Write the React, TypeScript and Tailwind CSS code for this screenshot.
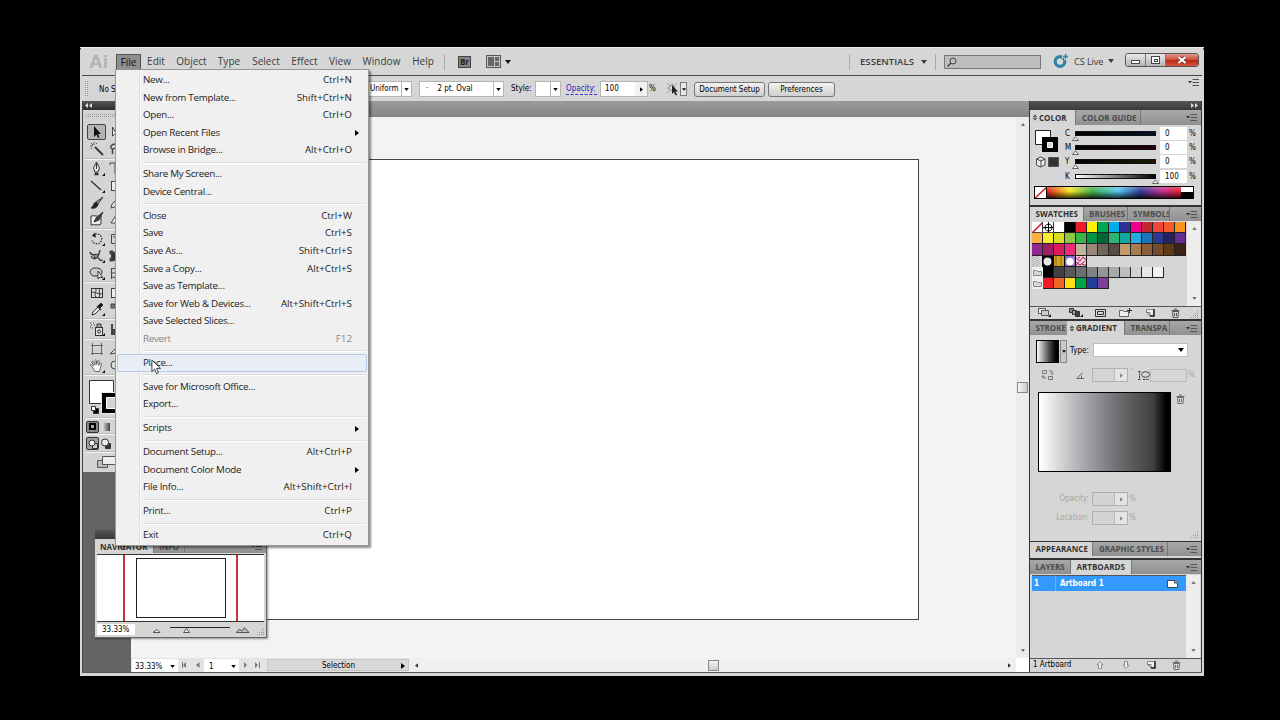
import type { ReactNode } from "react";
import clsx from "clsx";

type MenuEntry = {
  label: string;
  keys?: string;
  submenu?: boolean;
  disabled?: boolean;
  active?: boolean;
};

const fileMenu: MenuEntry[][] = [
  [
    { label: "New...", keys: "Ctrl+N" },
    { label: "New from Template...", keys: "Shift+Ctrl+N" },
    { label: "Open...", keys: "Ctrl+O" },
    { label: "Open Recent Files", submenu: true },
    { label: "Browse in Bridge...", keys: "Alt+Ctrl+O" },
  ],
  [{ label: "Share My Screen..." }, { label: "Device Central..." }],
  [
    { label: "Close", keys: "Ctrl+W" },
    { label: "Save", keys: "Ctrl+S" },
    { label: "Save As...", keys: "Shift+Ctrl+S" },
    { label: "Save a Copy...", keys: "Alt+Ctrl+S" },
    { label: "Save as Template..." },
    { label: "Save for Web & Devices...", keys: "Alt+Shift+Ctrl+S" },
    { label: "Save Selected Slices..." },
    { label: "Revert", keys: "F12", disabled: true },
  ],
  [{ label: "Place...", active: true }],
  [{ label: "Save for Microsoft Office..." }, { label: "Export..." }],
  [{ label: "Scripts", submenu: true }],
  [
    { label: "Document Setup...", keys: "Alt+Ctrl+P" },
    { label: "Document Color Mode", submenu: true },
    { label: "File Info...", keys: "Alt+Shift+Ctrl+I" },
  ],
  [{ label: "Print...", keys: "Ctrl+P" }],
  [{ label: "Exit", keys: "Ctrl+Q" }],
];

const swatchRows = [
  ["none", "reg", "#ffffff", "#000000", "#ed1c24", "#fff200", "#00a651", "#00aeef", "#2e3192", "#ec008c", "#c1272d", "#f0473a", "#f15a29", "#f7941e"],
  ["#fbb040", "#f9ed32", "#d7df23", "#8dc63f", "#39b54a", "#009444", "#006838", "#2bb673", "#14a79d", "#27aae1", "#1c75bc", "#2b3990", "#262262", "#662d91"],
  ["#92278f", "#9e1f63", "#da1c5c", "#ee2a7b", "#c2b59b", "#9b8579", "#726658", "#594a42", "#c49a6c", "#a97c50", "#8b5e3c", "#754c29", "#603913", "#3c2415"],
];
const grays = ["#000000", "#414042", "#58595b", "#6d6e71", "#808285", "#939598", "#a7a9ac", "#bcbec0", "#d1d3d4", "#e6e7e8", "#f1f2f2"];
const brights = ["#ed1c24", "#f26522", "#ffde17", "#00a14b", "#21409a", "#7f3f98"];

function Down({ className = "h-[4px] w-[6px]" }: { className?: string }) {
  return (
    <svg viewBox="0 0 6 4" className={clsx("shrink-0", className)}>
      <path d="M0 0h6L3 4z" fill="currentColor" />
    </svg>
  );
}

function Right({ className = "h-[6px] w-[4px]" }: { className?: string }) {
  return (
    <svg viewBox="0 0 4 6" className={clsx("shrink-0", className)}>
      <path d="M0 0v6l4-3z" fill="currentColor" />
    </svg>
  );
}

function FileMenu() {
  return (
    <div className="absolute left-[35px] top-[22px] h-[477px] w-[254px] border border-[#979797] bg-[#f0f0f0] shadow-[2px_2px_2px_rgba(0,0,0,0.45)]">
      <div className="flex h-full flex-col bg-[linear-gradient(to_right,transparent_23px,#dfdfdf_23px,#dfdfdf_24px,#fafafa_24px,#fafafa_25px,transparent_25px)] pt-[1.7px] font-['Open_Sans',sans-serif] text-[9.8px] text-[#1c1c1c] [font-stretch:normal]">
        {fileMenu.map((group, i) => (
          <div key={i} className="flex flex-col">
            {i > 0 && (
              <div className="flex h-[6.4px] items-center pl-[26px] pr-[2px]">
                <div className="h-[2px] w-full border-b border-white bg-[#dedede]" />
              </div>
            )}
            {group.map((item) => (
              <div
                key={item.label}
                className={clsx(
                  "mx-px flex h-[17.57px] items-center justify-between whitespace-nowrap pl-[26px]",
                  item.disabled && "text-[#868686]",
                  item.active && "rounded-[2px] bg-[#e9edf6] shadow-[inset_0_0_0_1px_#b4cbe8]",
                )}
              >
                <span className="tracking-[-0.28px]">{item.label}</span>
                {item.submenu ? (
                  <Right className="mr-[8px] h-[6px] w-[4px] text-black" />
                ) : (
                  <span className="mr-[15px]">{item.keys}</span>
                )}
              </div>
            ))}
          </div>
        ))}
      </div>
    </div>
  );
}

function AppBar() {
  return (
    <div className="flex h-[28px] shrink-0 items-center border-t border-[#eeeeee] font-['Open_Sans',sans-serif] text-[10px] text-[#3c3c3c] [font-stretch:normal]">
      <div className="w-[36px] pl-[9px] font-['Liberation_Sans',sans-serif] text-[19px] font-bold leading-none text-[#b2b2b2]">Ai</div>
      <div className="mt-[1px] flex h-[16px] w-[25px] items-center justify-center border border-[#555] bg-[#8f8f8f] text-[#111]">File</div>
      <span className="w-[30px] text-center">Edit</span>
      <span className="w-[41px] text-center">Object</span>
      <span className="w-[34px] text-center">Type</span>
      <span className="w-[40px] text-center">Select</span>
      <span className="w-[37px] text-center">Effect</span>
      <span className="w-[34px] text-center">View</span>
      <span className="w-[49px] text-center">Window</span>
      <span className="w-[34px] text-center">Help</span>
      <div className="ml-[4px] h-[16px] w-px bg-[#aaa]" />
      <div className="ml-[13px] flex h-[12px] w-[13px] items-center justify-center border border-[#444] bg-[#858585] text-[8px] font-bold text-[#222]">Br</div>
      <svg viewBox="0 0 15 13" className="ml-[15px] h-[13px] w-[15px]">
        <rect x="0.5" y="0.5" width="14" height="12" fill="#c6c6c6" stroke="#555" />
        <path d="M2 2h6v9H2zM9 2h4v4H9zM9 7h4v4H9z" fill="#666" />
      </svg>
      <Down className="ml-[4px] h-[4px] w-[6px] text-[#111]" />
      <div className="ml-auto h-[16px] w-px bg-[#aaa]" />
      <span className="ml-[10px] w-[56px] whitespace-nowrap pt-px text-[9.6px] font-semibold">ESSENTIALS</span>
      <Down className="ml-[5px] h-[4px] w-[6px]" />
      <div className="ml-[8px] h-[16px] w-px bg-[#aaa]" />
      <div className="ml-[8px] mt-[1px] flex h-[14px] w-[97px] items-center border border-[#777] bg-[#bdbdbd] pl-[2px]">
        <svg viewBox="0 0 10 10" className="h-[10px] w-[10px]" fill="none" stroke="#444">
          <circle cx="6" cy="4" r="3" />
          <path d="M4 6 0.5 9.5" strokeWidth="1.4" />
        </svg>
      </div>
      <svg viewBox="0 0 16 15" className="ml-[12px] mt-[-3px] h-[15px] w-[16px]" fill="none">
        <circle cx="7" cy="8.5" r="4.8" stroke="#2a83a8" strokeWidth="3.2" />
        <path d="M12.5 0v7M9 3.5h7" stroke="#d6d6d6" strokeWidth="3" />
        <path d="M12.5 1v5M10 3.5h5" stroke="#2a83a8" strokeWidth="1.3" />
      </svg>
      <span className="ml-[5px] w-[32px] whitespace-nowrap text-[9.2px] tracking-[-0.1px]">CS Live</span>
      <Down className="ml-[2px] mt-[-2px] h-[4px] w-[6px]" />
      <div className="ml-[11px] mr-[5px] mt-[-3px] flex h-[14px] w-[74px] overflow-hidden rounded-[3px] border border-[#555]">
        <div className="flex w-[20px] items-end justify-center border-r border-[#777] bg-gradient-to-b from-[#e8e8e8] to-[#b5b5b5] pb-[2px]">
          <div className="h-[4px] w-[9px] border border-[#444] bg-white" />
        </div>
        <div className="flex w-[20px] items-center justify-center border-r border-[#777] bg-gradient-to-b from-[#e8e8e8] to-[#b5b5b5]">
          <div className="flex h-[8px] w-[9px] items-center justify-center border border-[#444] bg-white">
            <div className="h-[3px] w-[4px] border border-[#444]" />
          </div>
        </div>
        <div className="flex flex-1 items-center justify-center bg-[linear-gradient(#e2998c,#cf4a36_50%,#b5281a_51%,#d9533a)]">
          <svg viewBox="0 0 10 8" className="h-[8px] w-[10px]">
            <path d="M1.5 1 8.5 7M8.5 1 1.5 7" stroke="#633" strokeWidth="3.5" />
            <path d="M1.5 1 8.5 7M8.5 1 1.5 7" stroke="#fff" strokeWidth="2.2" />
          </svg>
        </div>
      </div>
    </div>
  );
}

function DropBox({ className, children }: { className?: string; children?: ReactNode }) {
  return (
    <div className={clsx("flex h-[16px] shrink-0 items-center border border-[#b5b5b5] bg-white", className)}>
      <span className="flex-1 whitespace-pre">{children}</span>
      <span className="flex h-full w-[10px] items-center justify-center border-l border-[#b5b5b5]">
        <Down className="h-[3px] w-[5px]" />
      </span>
    </div>
  );
}

function PanelMenuIcon({ className }: { className?: string }) {
  return (
    <svg viewBox="0 0 11 7" className={clsx("h-[7px] w-[11px] shrink-0", className)}>
      <path d="M0 2h4L2 4.5z" fill="#333" />
      <path d="M4.5 .5H11M4.5 3.5H11M4.5 6.5H11" stroke="#555" />
    </svg>
  );
}

function ControlBar() {
  return (
    <div className="flex h-[26px] shrink-0 items-center border-t border-[#4a4a4a] bg-[#d6d6d6] pt-px text-[8px] leading-[12px] text-black">
      <svg viewBox="0 0 3 16" className="ml-[3px] h-[16px] w-[3px]">
        <path d="M.5 0v16M2.5 0v16" stroke="#999" strokeDasharray="1 1" />
      </svg>
      <span className="ml-[11px] w-[269px] pt-px">No Selection</span>
      <DropBox className="w-[44px] pl-[1px]">Uniform</DropBox>
      <DropBox className="ml-[7px] w-[85px] pl-[6px]">{"·    2 pt. Oval"}</DropBox>
      <span className="ml-[7px] w-[24px]">Style:</span>
      <DropBox className="w-[26px]" />
      <span className="ml-[5px] w-[31px] border-b border-dashed border-[#3a35c9] leading-[10px] text-[#2a25c0]">Opacity:</span>
      <div className="ml-[3px] flex h-[16px] w-[48px] items-center border border-[#b5b5b5] bg-white pl-[4px]">
        <span className="flex-1">100</span>
        <span className="flex h-full w-[12px] items-center justify-center bg-[#f2f2f2]">
          <Right className="h-[5px] w-[3px]" />
        </span>
      </div>
      <span className="ml-[1px] w-[8px]">%</span>
      <svg viewBox="0 0 14 14" className="ml-[9px] h-[14px] w-[14px]" fill="none">
        <path d="M3.5 3.5h5v5h-5zM1 1l2 2M11 1 9 3M1 11l2-2M1 6h2M6 1v2" stroke="#888" strokeDasharray="2 1" />
        <path d="M6 3v9l2-2 1.5 3.5 1.5-.7L9.5 9.5H12z" fill="#222" />
      </svg>
      <div className="flex h-[14px] w-[7px] items-center justify-center border border-[#777] bg-[#e8e8e8]">
        <Down className="h-[3px] w-[4px]" />
      </div>
      <div className="ml-[7px] flex h-[15px] w-[71px] items-center justify-center whitespace-nowrap rounded-[3px] border border-[#777] bg-gradient-to-b from-[#f2f2f2] to-[#cfcfcf] pt-px">
        Document Setup
      </div>
      <div className="ml-[3px] flex h-[15px] w-[67px] items-center justify-center rounded-[3px] border border-[#777] bg-gradient-to-b from-[#f2f2f2] to-[#cfcfcf] pt-px">
        Preferences
      </div>
      <PanelMenuIcon className="mb-[14px] ml-auto mr-[3px]" />
    </div>
  );
}

function Tool({ children, right, corner, selected }: { children: ReactNode; right?: ReactNode; corner?: boolean; selected?: boolean }) {
  return (
    <div className="flex h-[16.8px] items-center pl-[4px]">
      <div
        className={clsx(
          "flex h-[16px] w-[19px] shrink-0 items-center justify-center",
          selected && "rounded-[2px] border border-[#444] bg-[#b4b4b4]",
        )}
      >
        <svg viewBox="0 0 16 16" className="h-[16px] w-[16px] shrink-0" fill="none" stroke="#333">
          {children}
          {corner && <path d="M16 12v3h-3z" fill="#111" stroke="none" />}
        </svg>
      </div>
      <svg viewBox="0 0 16 16" className="ml-[3px] h-[16px] w-[16px] shrink-0" fill="none" stroke="#444">
        {right}
      </svg>
    </div>
  );
}

function ToolRule() {
  return <div className="mx-[2px] my-px h-px bg-[#f4f4f4] shadow-[0_-1px_0_#bdbdbd]" />;
}

function Toolbox() {
  return (
    <div className="flex w-[49px] shrink-0 flex-col border-l border-[#444] bg-[#646464]">
      <div className="flex h-[9px] shrink-0 items-center bg-gradient-to-b from-[#555] to-[#2e2e2e] pl-[2px]">
        <svg viewBox="0 0 7 5" className="h-[5px] w-[7px]">
          <path d="M3 0v5L0 2.5zM7 0v5L4 2.5z" fill="#ddd" />
        </svg>
      </div>
      <div className="flex h-[362px] shrink-0 flex-col bg-[#d4d4d4]">
        <svg viewBox="0 0 44 3" className="mb-[7px] ml-[3px] mt-[4px] h-[3px] w-[44px] shrink-0">
          <path d="M0 .5h44M0 2.5h44" stroke="#999" strokeDasharray="1 1" />
        </svg>
        <Tool selected right={<path d="M3.5 3v9l2.5-2 3 3z" fill="#eee" />}>
          <path d="M5 2v11l2.500-2.500L9 14l1.500-.7L9 10h3z" fill="#111" stroke="none" />
        </Tool>
        <Tool right={<path d="M7 3C3 3 1 5 2 7s4 0 4 0M4 8c-2 2 1 3-1 5" strokeWidth="1.5" />}>
          <path d="m6 6 8 8" strokeWidth="1.8" />
          <path d="M5 1v3M1 5h3M2 2l2 2M8 2 7 3M2 8l1-1" stroke="#555" />
        </Tool>
        <ToolRule />
        <Tool corner right={<path d="M1 4V2h10v2M6 2v11" />}>
          <path d="M7.5 1 4.5 7l1.500 4h3l1.500-4zM7.5 2v6" fill="#e8e8e8" />
          <path d="M5.5 13h4" strokeWidth="2.500" />
        </Tool>
        <Tool corner right={<rect x="2.5" y="3.5" width="12" height="9" fill="#eee" />}>
          <path d="m2 3 10 9" strokeWidth="1.4" />
        </Tool>
        <Tool right={<path d="m2 13 1-4 7-7 3 3-7 7z" fill="#ddd" />}>
          <path d="M14 2 7 7l2 2z" fill="#999" />
          <path d="M7 7c-3 1-2 4-5 6 4 1 7-1 7-4z" fill="#222" />
        </Tool>
        <Tool right={<path d="m2 12 5-8 7 3-4 5z" fill="#eee" />}>
          <path d="M2 5c3-1 7 1 10 0v8c-3 2-7 0-10 1z" fill="#eee" />
          <path d="m14 1-7 6-2 4 5-2z" fill="#444" />
        </Tool>
        <ToolRule />
        <Tool corner right={<path d="M2.5 3.5h11v9h-11zM4 5l6 5M10 7v3H7" />}>
          <path d="M4 4.5a5 5 0 1 1-1 5" strokeDasharray="1.5 1.2" strokeWidth="1.3" />
          <path d="M6 1.5 3 5l4 1.500z" fill="#222" stroke="none" />
        </Tool>
        <Tool corner right={<path d="M2.5 4.5h10v8h-10zM1 3h3v3H1zM1 10h3v3H1z" fill="#333" />}>
          <path d="M1 4c2 6 5 0 7 4s4 5 6 4M2 8c3 5 7 3 9-6" strokeWidth="1.3" />
          <circle cx="7" cy="8" r="2" fill="#999" />
        </Tool>
        <Tool corner right={<path d="M2.5 3v11M2 4l9-2M2 8h9M2 12l9 1M7 2v11" />}>
          <path d="M2 9c-2-3 0-6 4-6s7 1 7 4-3 4-6 4-4 0-5-2z" fill="#ccc" />
          <path d="M9 6v8l2-2 3 1z" fill="#fff" />
        </Tool>
        <ToolRule />
        <Tool right={<rect x="2.5" y="3.5" width="12" height="9" fill="#eee" />}>
          <rect x="2.5" y="3.5" width="11" height="9" fill="#ddd" />
          <path d="M2 8c3-3 8 3 12 0M6 3c3 3-2 6 1 9M11 3c-2 4 1 6-1 9" />
        </Tool>
        <Tool corner right={<path d="M2 3h4v4H2zM7 8h6v5H7z" fill="#777" />}>
          <path d="m3 14 1-3 5-5 2 2-5 5z" fill="#eee" />
          <path d="m9 5 3-3 2 2-3 3z" fill="#111" />
          <path d="m8 5 4 4" strokeWidth="1.5" />
        </Tool>
        <ToolRule />
        <Tool corner right={<path d="M3 3v11M5 14V8M8 14V5M11 14V9" strokeWidth="2" />}>
          <rect x="6.5" y="6.5" width="7" height="8" fill="#ddd" />
          <path d="M8 6V3h4v3" fill="#aaa" />
          <circle cx="10" cy="10.5" r="1.5" />
          <path d="M1 2h1M4 2h1M2 4h1M5 4h1M1 6h1M3 7h1" />
        </Tool>
        <ToolRule />
        <Tool right={<path d="m1 13 9-9 2 2-5 6z" fill="#ddd" />}>
          <path d="M3.5 2v12M12.5 2v12M2 4.5h12M2 12.5h12" stroke="#666" />
        </Tool>
        <Tool corner right={<circle cx="6" cy="7" r="4" fill="#ddd" />}>
          <path d="M4 10 1.500 7.500c-.5-1 .5-1.500 1.200-.8L4.500 8 3 4c0-1 1-1 1.500 0L6 7V2.500c0-1 1.200-1 1.500 0V6.500L9 3c.5-1 1.500-.5 1.200.4L9.500 7.500l2-2.500c.8-.5 1.300.2 1 1L10.500 13.500H6z" fill="#fafafa" stroke="#666" />
        </Tool>
        <ToolRule />
        <svg viewBox="0 0 46 40" className="h-[40px] w-[46px] shrink-0" fill="none">
          <path d="M6.5 3.5h24v23h-24z" fill="#fff" stroke="#333" />
          <path d="M18.5 15.5h26v21h-26z" fill="#000" stroke="#eee" />
          <path d="M23.500 20.5h14v11h-14z" fill="#d4d4d4" stroke="#fff" />
          <path d="M10.5 31.5h5v5h-5z" fill="#000" stroke="#333" />
          <path d="M8.5 29.5h4v4h-4z" fill="#fff" stroke="#333" />
        </svg>
        <ToolRule />
        <div className="flex h-[13px] shrink-0 items-center gap-[3px] pl-[3px]">
          <div className="flex h-[12px] w-[13px] items-center justify-center rounded-[2px] border border-[#333] bg-[#888]">
            <div className="h-[7px] w-[7px] border-2 border-black bg-[#aaa]" />
          </div>
          <div className="h-[8px] w-[8px] bg-gradient-to-r from-[#eee] to-[#444]" />
        </div>
        <ToolRule />
        <div className="flex h-[15px] shrink-0 items-center gap-px pl-[3px]">
          <div className="flex h-[13px] w-[13px] items-center justify-center rounded-[2px] border border-[#333] bg-[#a0a0a0]">
            <svg viewBox="0 0 10 10" className="h-[10px] w-[10px]" stroke="#333">
              <path d="M4.5 4.5h5v5h-5z" fill="#ccc" />
              <circle cx="4" cy="4" r="3" fill="#eee" />
            </svg>
          </div>
          <svg viewBox="0 0 11 11" className="h-[11px] w-[11px]" stroke="#333">
            <path d="M5.5 5.5h5v5h-5z" fill="#333" />
            <circle cx="5" cy="4.5" r="3.5" fill="#eee" />
          </svg>
        </div>
        <ToolRule />
        <svg viewBox="0 0 20 12" className="ml-[14px] mt-[2px] h-[12px] w-[20px] shrink-0" stroke="#555">
          <path d="M.5 4.5h10v7H.5z" fill="#bbb" />
          <path d="M5.5 .5h13v8h-13z" fill="#eee" />
        </svg>
      </div>
    </div>
  );
}

function Tabs({ children, className = "h-[14px]" }: { children: ReactNode; className?: string }) {
  return (
    <div
      className={clsx(
        "flex shrink-0 items-stretch bg-gradient-to-b from-[#a8a8a8] to-[#909090] font-['Open_Sans',sans-serif] text-[8px] font-bold text-[#4c4c4c] [font-stretch:normal]",
        className,
      )}
    >
      {children}
      <PanelMenuIcon className="ml-auto mr-[4px] self-center" />
    </div>
  );
}

function Tab({ label, active, arrows, className }: { label: string; active?: boolean; arrows?: boolean; className: string }) {
  return (
    <div
      className={clsx(
        "flex shrink-0 items-center overflow-hidden whitespace-nowrap border-r border-[#777] leading-none",
        active && "bg-[#d6d6d6] text-[#333]",
        className,
      )}
    >
      {arrows && (
        <svg viewBox="0 0 4 7" className="mr-[2px] h-[7px] w-[4px] shrink-0" fill="none" stroke="#333" strokeWidth="0.8">
          <path d="M.4 2.700 2 .8l1.600 1.900zM.4 4.300 2 6.200l1.600-1.900z" />
        </svg>
      )}
      {label}
    </div>
  );
}

const channels = [
  { name: "C", value: "0", bar: "bg-[linear-gradient(to_right,#000,#001226)]", thumb: "ml-[-3px]" },
  { name: "M", value: "0", bar: "bg-[linear-gradient(to_right,#000,#26000c)]", thumb: "ml-[-3px]" },
  { name: "Y", value: "0", bar: "bg-[linear-gradient(to_right,#000,#1c1a00)]", thumb: "ml-[-3px]" },
  { name: "K", value: "100", bar: "bg-[linear-gradient(to_right,#fff,#000)]", thumb: "ml-[77px]" },
];

function ColorPanel() {
  return (
    <>
      <Tabs className="h-[15px]">
        <Tab label="COLOR" active arrows className="w-[46px] pl-[3px]" />
        <Tab label="COLOR GUIDE" className="w-[65px] pl-[6px]" />
      </Tabs>
      <div className="flex h-[80px] shrink-0 flex-col bg-[#d6d6d6] pt-px">
        <div className="flex">
          <div className="w-[34px] pl-[5px] pt-[3px]">
            <svg viewBox="0 0 24 40" className="h-[40px] w-[24px]" fill="none">
              <path d="M.5 1.5h15v14H.5z" fill="#fff" stroke="#222" />
              <path d="M7 8h16v15H7z" fill="#000" />
              <path d="M12.5 13.5h5v5h-5z" fill="#d6d6d6" stroke="#fff" />
              <path d="M5.5 28 10 30v6l-4.500 2L1.500 36v-6zM1.5 30l4.500 2 4-2M6 32v6" fill="#eee" stroke="#444" />
              <path d="M13.5 28.5h10v9h-10z" fill="#333" stroke="#555" />
            </svg>
          </div>
          <div className="flex flex-col">
            {channels.map((c) => (
              <div key={c.name} className="flex h-[14.4px] items-center text-[8px]">
                <span className="w-[11px] pl-px pt-px">{c.name}</span>
                <div className="h-[5px] w-[81px]">
                  <div className={clsx("h-[5px] w-full border border-[#111]", c.bar)} />
                  <svg viewBox="0 0 7 5" className={clsx("h-[5px] w-[7px]", c.thumb)}>
                    <path d="M.5 4.5h6L3.5 .8z" fill="#f5f5f5" stroke="#666" />
                  </svg>
                </div>
                <div className="ml-[4px] flex h-[13px] w-[27px] items-center bg-white pl-[5px] pt-px">{c.value}</div>
                <span className="ml-[2px] pt-px">%</span>
              </div>
            ))}
          </div>
        </div>
        <div className="ml-[4px] mt-[2px] flex h-[13px] w-[160px] border border-black">
          <svg viewBox="0 0 12 11" className="h-[11px] w-[12px] shrink-0">
            <path d="M0 0h12v11H0z" fill="#fff" />
            <path d="m0 11 12-11" stroke="#d02020" strokeWidth="1.5" />
            <path d="M11.5 0v11" stroke="#111" />
          </svg>
          <div className="flex-1 bg-[linear-gradient(to_bottom,rgba(255,255,255,0.25),transparent_40%,rgba(0,0,0,0.75)),linear-gradient(to_right,#e3231c,#f5e422_17%,#3fae49_34%,#53c6ee_53%,#2f3b98_70%,#c32a8d_86%,#e3202c)]" />
          <div className="flex w-[12px] flex-col bg-black">
            <div className="h-[5px] bg-white" />
          </div>
        </div>
      </div>
    </>
  );
}

function Swatch({ color }: { color: string }) {
  if (color === "none" || color === "reg") {
    return (
      <svg viewBox="0 0 11 11" className="h-[11.2px] w-[11px]" fill="none">
        <path d="M0 0h11v11H0z" fill="#fff" />
        {color === "none" ? (
          <path d="M0 11 11 0" stroke="#c22" strokeWidth="1.5" />
        ) : (
          <path d="M5.5 0v11M0 5.5h11M5.5 2a3.5 3.5 0 1 0 .01 0" stroke="#000" />
        )}
        <path d="M10.5 0v10.5H0" stroke="#333" />
      </svg>
    );
  }
  return <div className="h-[11.2px] w-[11px] border-b border-r border-[#222]" style={{ backgroundColor: color }} />;
}

function Folder() {
  return (
    <div className="flex h-[11.2px] w-[11px] items-center justify-center bg-[#eee]">
      <svg viewBox="0 0 9 7" className="h-[7px] w-[9px]">
        <path d="M.5 1.5h3l1 1h4v4h-8z" fill="#d8d8d8" stroke="#888" />
      </svg>
    </div>
  );
}

function Trash({ className }: { className?: string }) {
  return (
    <svg viewBox="0 0 9 10" className={clsx("h-[10px] w-[9px] shrink-0", className)} fill="none" stroke="#555">
      <path d="M1.5 3.5h6l-.5 6H2zM.5 2.5h8M3 1h3M3.5 5v3M5.5 5v3" />
    </svg>
  );
}

function NewItem({ className }: { className?: string }) {
  return (
    <svg viewBox="0 0 9 9" className={clsx("h-[9px] w-[9px] shrink-0", className)} fill="none">
      <path d="M.5 1.5h7v6H4l-3.500-3z" fill="#eee" stroke="#888" />
      <path d="M.5 4.5h3.500v3z" fill="#fff" stroke="#777" />
      <path d="M8 1v7H4" stroke="#222" strokeWidth="1.500" />
    </svg>
  );
}

function Grip() {
  return (
    <svg viewBox="0 0 9 9" className="h-[9px] w-[9px] shrink-0" stroke="#999">
      <path d="M7 1.5h1M5 3.5h1M7 3.5h1M3 5.5h1M5 5.5h1M7 5.5h1M1 7.5h1M3 7.5h1M5 7.5h1M7 7.5h1" />
    </svg>
  );
}

function VTrack({ className }: { className?: string }) {
  return (
    <div className={clsx("flex flex-col items-center justify-between bg-[#ededed] py-[6px] text-[#777]", className)}>
      <Down className="h-[3px] w-[5px] rotate-180" />
      <Down className="h-[3px] w-[5px]" />
    </div>
  );
}

function SwatchesPanel() {
  return (
    <>
      <Tabs>
        <Tab label="SWATCHES" active className="w-[54px] pl-[5.5px]" />
        <Tab label="BRUSHES" className="w-[44px] pl-[5px]" />
        <Tab label="SYMBOLS" className="w-[42px] pl-[5px]" />
      </Tabs>
      <div className="flex h-[85px] shrink-0 bg-[#d6d6d6] pl-[2px]">
        <div className="flex w-[155px] shrink-0 flex-col pt-[1px]">
          {swatchRows.map((row, i) => (
            <div key={i} className="flex">
              {row.map((c, j) => (
                <Swatch key={j} color={c} />
              ))}
            </div>
          ))}
          <svg viewBox="0 0 55 11" className="h-[11.2px] w-[55px] shrink-0" preserveAspectRatio="none">
            <path d="M0 0h55v11H0z" fill="#000" />
            <path d="M0 0h10v11H0z" fill="#d8d8d8" />
            <path d="M1 0v11M5 0v11" stroke="#888" strokeDasharray="1 1" />
            <path d="M3 0v11M7 0v11" stroke="#aaa" strokeDasharray="1 1" strokeDashoffset="1" />
            <circle cx="15.5" cy="5.5" r="4" fill="#e8e8e8" />
            <path d="M22 0h10v10H22z" fill="#d8a020" />
            <path d="M24 0v10M29 0v10" stroke="#7a7020" />
            <path d="M33 0h10v10H33z" fill="#8a6cc8" />
            <circle cx="38" cy="5.5" r="3.8" fill="#fff" />
            <path d="M44 0h10v10H44z" fill="#f3d5de" />
            <path d="m44 2 4 3 3-4 3 3M44 6l4 3 5-4M44 9l3-3M50 8l4 1M46 1l2 1" stroke="#b52a5c" fill="none" />
          </svg>
          <div className="flex">
            <Folder />
            {grays.map((c) => (
              <Swatch key={c} color={c} />
            ))}
          </div>
          <div className="flex">
            <Folder />
            {brights.map((c) => (
              <Swatch key={c} color={c} />
            ))}
          </div>
        </div>
        <VTrack className="w-[14px]" />
      </div>
      <div className="flex h-[13px] shrink-0 items-center bg-[#d6d6d6] pl-[8px] shadow-[inset_0_1px_0_#555]">
        <svg viewBox="0 0 14 9" className="h-[9px] w-[14px]" stroke="#555">
          <path d="M.5 .5h7v5h-7z" fill="#eee" />
          <path d="M3.5 2.5h7v5h-7z" fill="#ccc" />
          <path d="M13 6v3h-3z" fill="#111" stroke="none" />
        </svg>
        <svg viewBox="0 0 15 9" className="ml-[17px] h-[9px] w-[15px]" stroke="#333">
          <path d="M.5 .5h4v4h-4z" fill="#888" />
          <path d="M3.5 2.5h4v4h-4z" fill="#aaa" />
          <path d="M6.5 3.5h4v5h-4z" fill="#444" />
          <path d="M14 6v3h-3z" fill="#111" stroke="none" />
        </svg>
        <svg viewBox="0 0 11 8" className="ml-[11px] h-[8px] w-[11px]" stroke="#333" fill="none">
          <path d="M.5 .5h10v7H.5zM2.5 2.5h6v3h-6z" />
        </svg>
        <svg viewBox="0 0 13 9" className="ml-[13px] h-[9px] w-[13px]" stroke="#666">
          <path d="M.5 2.5h3l1 1h5v5h-9z" fill="#eee" />
          <path d="M10.5 0v5M8 2.5h5" stroke="#222" />
        </svg>
        <NewItem className="ml-[14px]" />
        <Trash className="ml-[16px]" />
        <span className="ml-auto mr-[2px] mt-[3px]">
          <Grip />
        </span>
      </div>
    </>
  );
}

function StepField({ className }: { className?: string }) {
  return (
    <div className={clsx("flex h-[14px] w-[36px] items-stretch border border-[#b0b0b0]", className)}>
      <div className="flex-1 bg-[#d4d4d4]" />
      <div className="flex w-[13px] items-center justify-center border-l border-[#bbb] bg-[#e4e4e4] text-[#888]">
        <Right className="h-[5px] w-[3px]" />
      </div>
    </div>
  );
}

function GradientPanel() {
  return (
    <>
      <Tabs>
        <Tab label="STROKE" className="w-[37px] border-r-0 pl-[5.5px]" />
        <Tab label="GRADIENT" active arrows className="w-[58px] pl-[3px]" />
        <Tab label="TRANSPA" className="w-[45px] pl-[5.5px]" />
      </Tabs>
      <div className="flex h-[205px] shrink-0 flex-col bg-[#d6d6d6] text-[8px]">
        <div className="flex h-[31px] items-center pl-[6px] pt-px">
          <div className="h-[23px] w-[23px] border border-black bg-gradient-to-r from-white to-black" />
          <div className="ml-px flex h-[23px] w-[7px] items-center justify-center border border-[#888] bg-[#c8c8c8]">
            <Down className="h-[3px] w-[4px]" />
          </div>
          <span className="ml-[3px] w-[23px]">Type:</span>
          <div className="mb-[2px] flex h-[14px] w-[95px] items-center justify-end border border-[#c0c0c0] bg-white pr-[3px]">
            <Down />
          </div>
        </div>
        <div className="mt-[2px] flex h-[14px] items-center pl-[11px] text-[#aaa]">
          <svg viewBox="0 0 13 12" className="h-[12px] w-[13px]" fill="none" stroke="#777">
            <path d="M1.5 1.5h4v3h-4zM7.5 7.5h4v3h-4zM8 2h3v3M9.5 4l1.500 1.500L12.5 4M5 9H2V7M.5 8 2 6.5 3.5 8" />
          </svg>
          <svg viewBox="0 0 9 7" className="ml-[22px] h-[7px] w-[9px]" fill="none" stroke="#666">
            <path d="M6.500 .5.8 6.500H8M5.500 3.500v3" />
          </svg>
          <StepField className="ml-[7px]" />
          <span className="ml-[2px] w-[5px] self-start text-[7px] leading-[6px]">°</span>
          <svg viewBox="0 0 13 11" className="ml-[2px] h-[11px] w-[13px]" fill="none" stroke="#444">
            <path d="M2.5 1v9M1 1.5h3M1 9.5h3M6 9.5h6" strokeDasharray="2 .5" />
            <ellipse cx="8.5" cy="4.5" rx="4" ry="2.8" />
          </svg>
          <div className="h-[13px] w-[37px] border border-[#b8b8b8]" />
          <span className="ml-px">%</span>
        </div>
        <div className="mt-[10px] flex pl-[8px]">
          <div className="h-[80px] w-[133px] border border-black bg-[linear-gradient(to_right,#fff,#a7a9ac_34%,#6d6e71_60%,#414042_87%,#000_97%)]" />
          <Trash className="ml-[5px] mt-[2px] opacity-80" />
        </div>
        <div className="mt-[20px] flex h-[14px] items-center text-[#a4a4a4]">
          <span className="w-[59px] text-right">Opacity:</span>
          <StepField className="ml-[3px]" />
          <span className="ml-[1px]">%</span>
        </div>
        <div className="mt-[5px] flex h-[14px] items-center text-[#a4a4a4]">
          <span className="w-[59px] text-right">Location:</span>
          <StepField className="ml-[3px]" />
          <span className="ml-[1px]">%</span>
        </div>
        <div className="mb-px mr-[2px] mt-auto flex justify-end">
          <Grip />
        </div>
      </div>
    </>
  );
}

function ArtboardsPanel() {
  return (
    <>
      <Tabs>
        <Tab label="LAYERS" className="w-[41px] pl-[5.5px]" />
        <Tab label="ARTBOARDS" active className="w-[61px] pl-[5.5px]" />
      </Tabs>
      <div className="flex h-[84px] shrink-0 bg-[#d6d6d6] pl-[2px] pt-px">
        <div className="flex flex-1 flex-col border-t border-[#555]">
          <div className="flex h-[15px] items-center bg-[#3399fe] text-[8px] font-bold text-white">
            <span className="h-full w-[24px] border-r border-[#6ab3ff] pl-[2px] leading-[15px]">1</span>
            <span className="pl-[4px]">Artboard 1</span>
            <svg viewBox="0 0 11 8" className="ml-auto mr-[8px] h-[8px] w-[11px]">
              <path d="M.5 .5h7l3 2.500v4.500H.5z" fill="#fff" stroke="#444" />
              <path d="M7.5 .5V3h3" fill="#ccc" stroke="#444" />
            </svg>
          </div>
        </div>
        <VTrack className="mr-[1px] w-[14px]" />
      </div>
      <div className="flex flex-1 items-center bg-[#d6d6d6] pb-px pl-[3px] text-[8px] shadow-[inset_0_1px_0_#555]">
        <span className="w-[63px]">1 Artboard</span>
        <svg viewBox="0 0 8 8" className="h-[8px] w-[8px]" fill="#eee" stroke="#888">
          <path d="m4 .7 3 3H5.5v4h-3v-4H1z" />
        </svg>
        <svg viewBox="0 0 8 8" className="ml-[18px] h-[8px] w-[8px] rotate-180" fill="#eee" stroke="#888">
          <path d="m4 .7 3 3H5.5v4h-3v-4H1z" />
        </svg>
        <NewItem className="ml-[17px]" />
        <Trash className="ml-[16px] opacity-80" />
      </div>
    </>
  );
}

function Dock() {
  return (
    <div className="flex w-[173px] shrink-0 flex-col border-l border-r border-[#333] bg-[#d6d6d6]">
      <div className="flex h-[9px] shrink-0 items-center justify-end bg-gradient-to-b from-[#555] to-[#3a3a3a] pr-[3px]">
        <svg viewBox="0 0 7 5" className="h-[5px] w-[7px]">
          <path d="M0 0v5l3-2.500zM4 0v5l3-2.500z" fill="#ddd" />
        </svg>
      </div>
      <ColorPanel />
      <div className="h-[2px] shrink-0 bg-[#333]" />
      <SwatchesPanel />
      <div className="h-[2px] shrink-0 bg-[#333]" />
      <GradientPanel />
      <div className="mt-px h-px shrink-0 bg-[#333]" />
      <Tabs>
        <Tab label="APPEARANCE" active className="w-[63px] pl-[5.5px]" />
        <Tab label="GRAPHIC STYLES" className="w-[75px] pl-[6px]" />
      </Tabs>
      <div className="mt-[2px] h-[2px] shrink-0 bg-[#333]" />
      <ArtboardsPanel />
    </div>
  );
}

function StatusBar() {
  return (
    <div className="flex h-[14px] shrink-0 items-center bg-[#e4e4e4] text-[8px]">
      <div className="ml-px flex h-[13px] w-[46px] items-center justify-between bg-white pl-[3px] pr-[3px] pt-[3px]">
        33.33%
        <Down className="h-[3px] w-[5px]" />
      </div>
      <svg viewBox="0 0 22 6" className="ml-[4px] h-[6px] w-[22px] text-[#777]" fill="currentColor">
        <path d="M0 0h1v6H0zM1 3l3-3v6zM14 3l3.500-3v6z" />
      </svg>
      <div className="flex h-[13px] w-[35px] items-center justify-between bg-white pl-[5px] pr-[3px] pt-[3px]">
        1
        <Down className="h-[3px] w-[5px]" />
      </div>
      <svg viewBox="0 0 18 6" className="ml-[5px] h-[6px] w-[18px] text-[#777]" fill="currentColor">
        <path d="M0 0v6l3-3zM11 0v6l3-3zM15 0h1v6h-1z" />
      </svg>
      <div className="ml-[5px] flex h-[12px] w-[142px] items-center border border-[#c4c4c4] bg-[#d8d8d8] pt-px">
        <span className="flex-1 pl-[8px] pt-px text-center">Selection</span>
        <Right className="mr-[3px] h-[6px] w-[4px]" />
      </div>
      <div className="flex h-full flex-1 items-center justify-between bg-[#f0f0f0] pl-[6px] pr-[5px] text-[#333]">
        <Right className="h-[5px] w-[3px] rotate-180" />
        <div className="h-[11px] w-[11px] border border-[#888] bg-gradient-to-b from-[#f4f4f4] to-[#ccc]" />
        <Right className="h-[5px] w-[3px]" />
      </div>
      <div className="h-full w-[13px] bg-white" />
    </div>
  );
}

function Workspace() {
  return (
    <div className="flex flex-1 flex-col">
      <div className="h-[16px] shrink-0 bg-gradient-to-b from-[#9a9a9a] to-[#858585]" />
      <div className="flex flex-1 bg-[#f3f3f3]">
        <div className="flex flex-1 pl-[100px] pt-[42px]">
          <div className="h-[461px] w-[688px] border border-[#444] bg-white" />
        </div>
        <div className="flex w-[13px] flex-col items-center justify-between bg-[#ececec] py-[6px] text-[#555]">
          <Down className="h-[3px] w-[4px] rotate-180" />
          <div className="h-[11px] w-[11px] border border-[#888] bg-gradient-to-r from-[#f4f4f4] to-[#ccc]" />
          <Down className="h-[3px] w-[4px]" />
        </div>
      </div>
      <StatusBar />
    </div>
  );
}

function Navigator() {
  return (
    <div className="absolute left-[14px] top-[482px] flex h-[109px] w-[173px] flex-col border border-[#666] bg-[#d6d6d6] shadow-[1px_1px_2px_rgba(0,0,0,0.4)]">
      <div className="h-[9px] shrink-0 bg-gradient-to-b from-[#555] to-[#3a3a3a]" />
      <Tabs className="h-[14px]">
        <Tab label="NAVIGATOR" active className="w-[59px] pl-[5px] pt-px" />
        <Tab label="INFO" className="w-[31px] pl-[5px] pt-px" />
      </Tabs>
      <div className="mx-[2px] mt-[1px] flex h-[68px] shrink-0 items-center border-y border-[#333] bg-white">
        <div className="ml-[26px] h-full w-[1.5px] shrink-0 bg-[#c8303a]" />
        <div className="ml-[11.5px] h-[60px] w-[90px] border border-[#222]" />
        <div className="ml-[10px] h-full w-[1.5px] shrink-0 bg-[#c8303a]" />
      </div>
      <div className="flex flex-1 items-center pl-[2px] text-[8px]">
        <span className="h-[11px] w-[38px] bg-white pl-[5px] leading-[12px]">33.33%</span>
        <svg viewBox="0 0 100 9" className="ml-[17px] h-[9px] w-[100px]" fill="none" stroke="#555">
          <path d="M1 7.5h7L5 4.500z" fill="#eee" />
          <path d="M18 2.5h60" stroke="#222" />
          <path d="M31.500 7.5h6L34.500 3.500z" fill="#eee" />
          <path d="M84 7.5h13L92.5 2.500 90 6 87.5 4z" fill="#bbb" />
        </svg>
        <span className="ml-auto mr-[1px] mt-[4px]">
          <Grip />
        </span>
      </div>
    </div>
  );
}

export default function App() {
  return (
    <div className="h-[720px] w-[1280px] overflow-hidden bg-black pl-[80px] pt-[47px] font-['DejaVu_Sans_Condensed','DejaVu_Sans',sans-serif] [font-stretch:condensed]">
      <div className="relative flex h-[629px] w-[1124px] flex-col rounded-t-[4px] bg-[#d6d6d6]">
        <AppBar />
        <div className="mx-[2px] mb-[3px] flex flex-1 flex-col border-b border-[#555]">
          <ControlBar />
          <div className="flex flex-1">
            <Toolbox />
            <Workspace />
            <Dock />
          </div>
        </div>
        <Navigator />
        <FileMenu />
        <svg viewBox="0 0 12 17" className="absolute left-[71px] top-[312px] h-[16px] w-[11px]">
          <path d="M1 1v12.500l3-2.800 2 5 2.200-1-2-4.700H10.500z" fill="#fff" stroke="#333" />
        </svg>
      </div>
    </div>
  );
}
